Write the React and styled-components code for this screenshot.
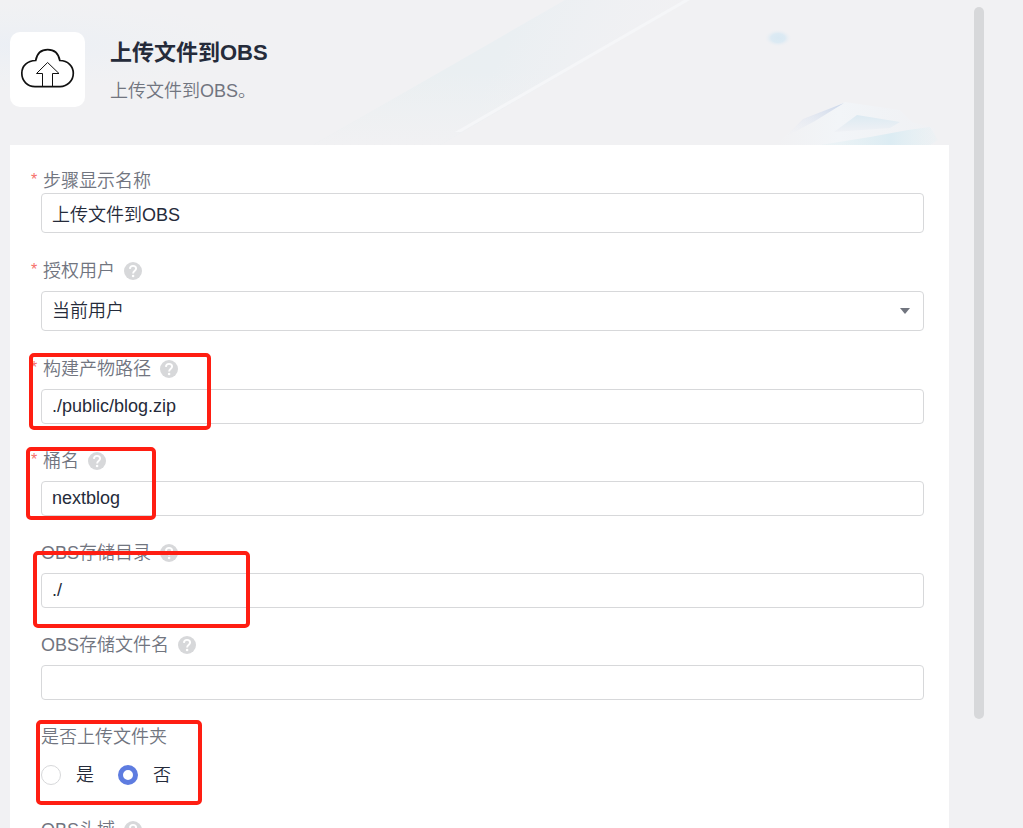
import React, { useState } from "react";
import styled, { createGlobalStyle } from "styled-components";

const GlobalStyle = createGlobalStyle`
* {
  box-sizing: border-box;
}
body {
  margin: 0;
  background: #f1f1f3;
  color: #252b3a;
  font-family: "Liberation Sans", "Noto Sans CJK SC", sans-serif;
  font-size: 18px;
  line-height: 24px;
  font-weight: 350;
}
`;

const Page = styled.div`
  position: relative;
  display: flex;
  height: 100vh;
  overflow: hidden;
`;

const Backdrop = styled.svg`
  position: absolute;
  top: 0;
  left: 0;
  width: 1023px;
  height: 145px;
`;

const Content = styled.div`
  position: relative;
  flex: 1;
  min-width: 0;
  padding-left: 10px;
`;

const Rail = styled.div`
  position: relative;
  width: 74px;
  padding: 7px 0 0 25px;
`;

const Thumb = styled.div`
  width: 10px;
  height: 86vh;
  border-radius: 5px;
  background: #d7d8da;
`;

const Header = styled.header`
  display: flex;
  gap: 25px;
  height: 145px;
  padding-top: 32px;
`;

const IconTile = styled.div`
  display: flex;
  align-items: center;
  justify-content: center;
  width: 75px;
  height: 75px;
  border-radius: 10px;
  background: #fff;
`;

const Heading = styled.div`
  display: flex;
  flex-direction: column;
  gap: 10px;
  padding-top: 5px;
`;

const Title = styled.h1`
  margin: 0;
  font-size: 22px;
  line-height: 32px;
  font-weight: 700;
`;

const Subtitle = styled.p`
  margin: 0;
  color: #71757f;
`;

const Panel = styled.form`
  padding: 24px 25px 24px 31px;
  background: #fff;
`;

const Field = styled.div`
  position: relative;
  display: flex;
  flex-direction: column;
  gap: ${(p) => (p.$flush ? 0 : 8)}px;
  margin-bottom: ${(p) => (p.$tall ? 26 : 25)}px;
`;

const LabelRow = styled.div`
  display: flex;
  align-items: center;
  gap: 9px;
  height: 24px;
  margin-left: ${(p) => (p.$required ? -10 : 0)}px;
  color: #71757f;
`;

const Star = styled.span`
  display: inline-block;
  width: 12px;
  color: #f66f6a;
  font-size: 16px;
  line-height: 16px;
  vertical-align: 2px;
`;

const TextInput = styled.input`
  width: 100%;
  height: ${(p) => (p.$tall ? 40 : 35)}px;
  padding: 0 10px;
  border: 1px solid #d7d8da;
  border-radius: 4px;
  outline: none;
  background: #fff;
  color: #252b3a;
  font: inherit;
`;

const SelectWrap = styled.div`
  position: relative;
  display: flex;
`;

const Select = styled.select`
  width: 100%;
  height: 40px;
  padding: 0 10px;
  border: 1px solid #d7d8da;
  border-radius: 4px;
  outline: none;
  appearance: none;
  background: #fff;
  color: #252b3a;
  font: inherit;
`;

const Caret = styled.svg`
  position: absolute;
  top: 17px;
  right: 14px;
  pointer-events: none;
`;

const RadioRow = styled.div`
  display: flex;
  align-items: center;
  gap: 24px;
  height: 36px;
`;

const RadioLabel = styled.label`
  display: flex;
  align-items: center;
  gap: 15px;
`;

const Radio = styled.input`
  appearance: none;
  width: 20px;
  height: 20px;
  margin: 0;
  border: 1px solid #d7d8da;
  border-radius: 50%;
  background: #fff;

  &:checked {
    border: 5px solid #5e7ce0;
  }
`;

// red frame drawn over a field
const Mark = styled.div`
  position: absolute;
  top: ${(p) => p.$top}px;
  left: ${(p) => p.$left}px;
  width: ${(p) => p.$width}px;
  height: ${(p) => p.$height}px;
  border: 4px solid #ff1e12;
  border-radius: 5px;
  pointer-events: none;
`;

function HelpIcon() {
  return (
    <svg width="18" height="18" viewBox="0 0 18 18" aria-hidden="true">
      <circle cx="9" cy="9" r="9" fill="#d7d8da" />
      <path d="M5.900 6.900C6 4.900 7.200 3.900 9 3.900S12.100 5 12.100 6.600C12.100 8.700 9.100 8.900 9.100 11.600" fill="none" stroke="#fff" strokeWidth="1.900" />
      <circle cx="9.100" cy="14" r="1.300" fill="#fff" />
    </svg>
  );
}

function CloudIcon() {
  return (
    <svg width="55" height="43" viewBox="0 0 55 43" fill="none" stroke="#111" aria-hidden="true">
      <path
        d="M15.700 12.500C17 5.500 21.500 1.700 27.700 1.700S38.500 5.500 39.800 12.500C48 12.800 53.300 18 53.300 25.300S47.500 38.600 40 38.600H15C7.500 38.600 1.800 33 1.800 25.300S7.500 12.800 15.700 12.500Z"
        strokeWidth="1.700"
      />
      <path d="M22.500 38.500V25.500H16.500L27.600 14.500L39 25.500H32.500V38.500" strokeWidth="1" />
    </svg>
  );
}

function HeaderArt() {
  return (
    <Backdrop viewBox="0 0 1023 145" aria-hidden="true">
      <defs>
        <linearGradient id="band" gradientUnits="userSpaceOnUse" x1="400" y1="20" x2="640" y2="130">
          <stop offset="0" stopColor="#eaeff1" />
          <stop offset="0.400" stopColor="#eaeff2" />
          <stop offset="1" stopColor="#eff0f4" stopOpacity="0" />
        </linearGradient>
        <linearGradient id="fade" x1="0" y1="0" x2="0" y2="1">
          <stop offset="0" stopColor="#f1f1f3" stopOpacity="0" />
          <stop offset="0.500" stopColor="#f1f1f3" stopOpacity="0" />
          <stop offset="1" stopColor="#f1f1f3" />
        </linearGradient>
        <radialGradient id="corner">
          <stop offset="0" stopColor="#ebeff5" />
          <stop offset="1" stopColor="#eef1f4" stopOpacity="0" />
        </radialGradient>
        <radialGradient id="spot">
          <stop offset="0" stopColor="#d8e8f2" />
          <stop offset="0.500" stopColor="#dceaf3" />
          <stop offset="1" stopColor="#f1f1f3" stopOpacity="0" />
        </radialGradient>
        <linearGradient id="wing" x1="0" y1="1" x2="1" y2="0">
          <stop offset="0" stopColor="#eceef4" stopOpacity="0" />
          <stop offset="1" stopColor="#c9d4e8" />
        </linearGradient>
        <linearGradient id="crest" x1="0" y1="0" x2="1" y2="0">
          <stop offset="0" stopColor="#f1f4f7" stopOpacity="0" />
          <stop offset="0.400" stopColor="#f2f5f8" />
          <stop offset="1" stopColor="#eff2f6" stopOpacity="0.300" />
        </linearGradient>
        <linearGradient id="fold" x1="0" y1="0" x2="0" y2="1">
          <stop offset="0" stopColor="#dceaf2" />
          <stop offset="1" stopColor="#eff1f5" />
        </linearGradient>
        <linearGradient id="base" x1="0" y1="0" x2="1" y2="0">
          <stop offset="0" stopColor="#e3f0f3" stopOpacity="0.300" />
          <stop offset="0.600" stopColor="#dcecf3" />
          <stop offset="1" stopColor="#e3f0f3" stopOpacity="0.200" />
        </linearGradient>
      </defs>
      <ellipse cx="20" cy="45" rx="240" ry="45" fill="url(#corner)" />
      <path d="M313 145L565 0H690L440 145Z" fill="url(#band)" />
      <path d="M313 145L565 0H690L440 145Z" fill="url(#fade)" />
      <path d="M455 132L684 0H690L461 132Z" fill="#f5f6f8" />
      <ellipse cx="778" cy="38" rx="14" ry="9" fill="url(#spot)" />
      <path d="M775 145L805 119L845 102L900 110L912 122L935 128V145Z" fill="url(#crest)" />
      <path d="M785 137L803 119L844 103L815 121Z" fill="url(#wing)" />
      <path d="M834 132L857 115L900 122L890 128Z" fill="url(#fold)" />
      <path d="M820 145L870 137L908 130L930 127L938 140L930 145Z" fill="url(#base)" />
    </Backdrop>
  );
}

function FormField({ id, label, required, help, tall, flush, mark, children }) {
  return (
    <Field $tall={tall} $flush={flush}>
      <LabelRow $required={required}>
        <label htmlFor={id}>
          {required && <Star>*</Star>}
          {label}
        </label>
        {help && <HelpIcon />}
      </LabelRow>
      {children}
      {mark && <Mark $top={mark.top} $left={mark.left} $width={mark.width} $height={mark.height} />}
    </Field>
  );
}

function App() {
  const [folder, setFolder] = useState("no");

  return (
    <>
      <GlobalStyle />
      <Page>
        <HeaderArt />
        <Content>
          <Header>
            <IconTile>
              <CloudIcon />
            </IconTile>
            <Heading>
              <Title>上传文件到OBS</Title>
              <Subtitle>上传文件到OBS。</Subtitle>
            </Heading>
          </Header>
          <Panel>
            <FormField id="name" label="步骤显示名称" required tall flush>
              <TextInput id="name" $tall defaultValue="上传文件到OBS" />
            </FormField>
            <FormField id="user" label="授权用户" required help tall>
              <SelectWrap>
                <Select id="user">
                  <option>当前用户</option>
                </Select>
                <Caret width="10" height="6" viewBox="0 0 10 6">
                  <path d="M0 0H10L5 6Z" fill="#71757f" />
                </Caret>
              </SelectWrap>
            </FormField>
            <FormField id="path" label="构建产物路径" required help mark={{ top: -4, left: -12, width: 182, height: 77 }}>
              <TextInput id="path" defaultValue="./public/blog.zip" />
            </FormField>
            <FormField id="bucket" label="桶名" required help mark={{ top: -2, left: -15, width: 130, height: 73 }}>
              <TextInput id="bucket" defaultValue="nextblog" />
            </FormField>
            <FormField id="dir" label="OBS存储目录" help mark={{ top: 10, left: -8, width: 217, height: 77 }}>
              <TextInput id="dir" defaultValue="./" />
            </FormField>
            <FormField id="file" label="OBS存储文件名" help>
              <TextInput id="file" />
            </FormField>
            <FormField id="folder-yes" label="是否上传文件夹" mark={{ top: -5, left: -5, width: 166, height: 85 }}>
              <RadioRow>
                <RadioLabel>
                  <Radio id="folder-yes" type="radio" name="folder" checked={folder === "yes"} onChange={() => setFolder("yes")} />
                  是
                </RadioLabel>
                <RadioLabel>
                  <Radio type="radio" name="folder" checked={folder === "no"} onChange={() => setFolder("no")} />
                  否
                </RadioLabel>
              </RadioRow>
            </FormField>
            <FormField id="headers" label="OBS头域" help>
              <TextInput id="headers" />
            </FormField>
          </Panel>
        </Content>
        <Rail>
          <Thumb />
        </Rail>
      </Page>
    </>
  );
}

export default App;
